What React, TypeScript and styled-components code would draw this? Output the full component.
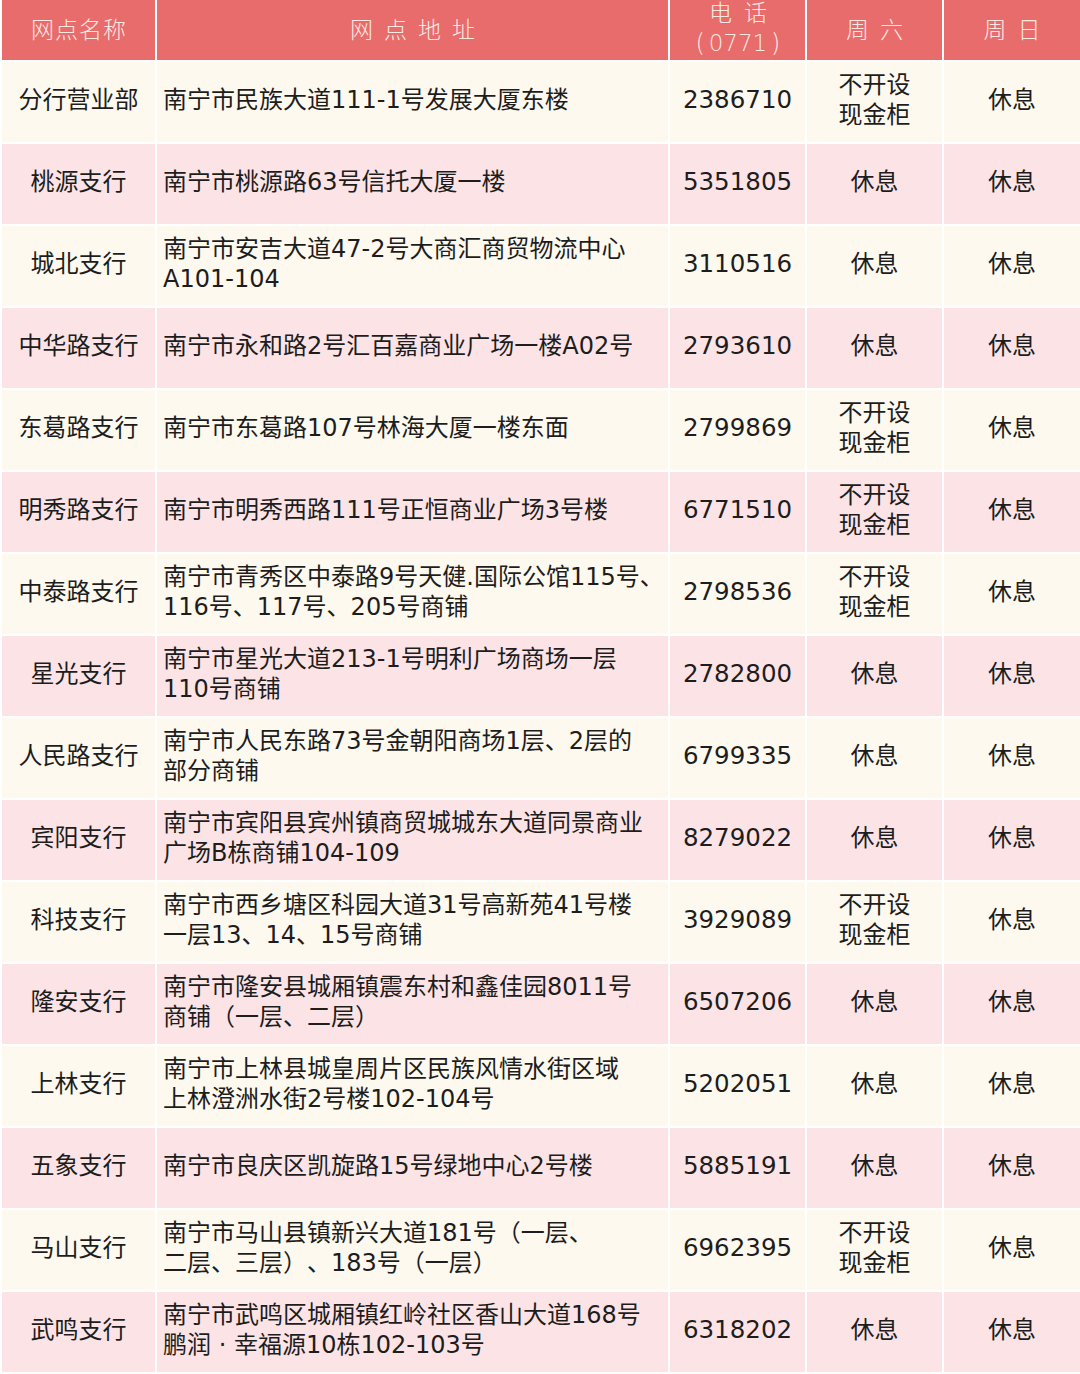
import { createGlobalStyle, styled } from "styled-components";

const GlobalStyle = createGlobalStyle`
  html, body {
    margin: 0;
    padding: 0;
    background: #ffffff;
  }
  body {
    font-family: "DejaVu Sans", "Noto Sans CJK SC", sans-serif;
    text-spacing-trim: space-all;
  }
`;

const Table = styled.div`
  width: 1080px;
  display: grid;
  grid-template-columns: 153px 511px 135px 135px 136px;
  grid-auto-rows: 80px;
  grid-template-rows: 60px;
  column-gap: 2px;
  row-gap: 2px;
  padding-left: 2px;
  box-sizing: border-box;
  background: #ffffff;
`;

const HeadCell = styled.div<{ $spaced?: boolean }>`
  background: #e86c6b;
  color: #fde9e2;
  font-family: "Noto Sans CJK SC", sans-serif;
  font-size: 23px;
  font-weight: 300;
  line-height: 28px;
  letter-spacing: ${(p) => (p.$spaced ? "11px" : "1px")};
  padding-left: ${(p) => (p.$spaced ? "11px" : "1px")};
  padding-bottom: 5px;
  display: flex;
  flex-direction: column;
  align-items: center;
  justify-content: center;
  text-align: center;
  white-space: pre;
`;

const HeadLine = styled.span<{ $spaced?: boolean }>`
  letter-spacing: ${(p) => (p.$spaced ? "12px" : "0")};
  padding-left: ${(p) => (p.$spaced ? "12px" : "0")};
  font-family: "DejaVu Sans", "Noto Sans CJK SC", sans-serif;
  font-weight: 300;
`;

const Paren = styled.span`
  font-family: "Noto Sans CJK SC", sans-serif;
  display: inline-block;
  width: 18px;
  text-align: center;
`;

const Cell = styled.div<{ $pink: boolean; $left?: boolean }>`
  background: ${(p) => (p.$pink ? "#fce4e6" : "#fdf9ef")};
  color: #1d1d1d;
  font-size: 24px;
  line-height: 30px;
  display: flex;
  flex-direction: column;
  justify-content: center;
  align-items: ${(p) => (p.$left ? "flex-start" : "center")};
  text-align: ${(p) => (p.$left ? "left" : "center")};
  padding: ${(p) => (p.$left ? "0 6px 4px" : "0 0 4px")};
  box-sizing: border-box;
  white-space: nowrap;
`;

const Phone = styled.span`
  font-size: 24.5px;
`;

type Branch = {
  name: string;
  addr: string[];
  phone: string;
  sat: boolean;
};

const branches: Branch[] = [
  { name: "分行营业部", addr: ["南宁市民族大道111-1号发展大厦东楼"], phone: "2386710", sat: false },
  { name: "桃源支行", addr: ["南宁市桃源路63号信托大厦一楼"], phone: "5351805", sat: true },
  { name: "城北支行", addr: ["南宁市安吉大道47-2号大商汇商贸物流中心", "A101-104"], phone: "3110516", sat: true },
  { name: "中华路支行", addr: ["南宁市永和路2号汇百嘉商业广场一楼A02号"], phone: "2793610", sat: true },
  { name: "东葛路支行", addr: ["南宁市东葛路107号林海大厦一楼东面"], phone: "2799869", sat: false },
  { name: "明秀路支行", addr: ["南宁市明秀西路111号正恒商业广场3号楼"], phone: "6771510", sat: false },
  { name: "中泰路支行", addr: ["南宁市青秀区中泰路9号天健.国际公馆115号、", "116号、117号、205号商铺"], phone: "2798536", sat: false },
  { name: "星光支行", addr: ["南宁市星光大道213-1号明利广场商场一层", "110号商铺"], phone: "2782800", sat: true },
  { name: "人民路支行", addr: ["南宁市人民东路73号金朝阳商场1层、2层的", "部分商铺"], phone: "6799335", sat: true },
  { name: "宾阳支行", addr: ["南宁市宾阳县宾州镇商贸城城东大道同景商业", "广场B栋商铺104-109"], phone: "8279022", sat: true },
  { name: "科技支行", addr: ["南宁市西乡塘区科园大道31号高新苑41号楼", "一层13、14、15号商铺"], phone: "3929089", sat: false },
  { name: "隆安支行", addr: ["南宁市隆安县城厢镇震东村和鑫佳园8011号", "商铺（一层、二层）"], phone: "6507206", sat: true },
  { name: "上林支行", addr: ["南宁市上林县城皇周片区民族风情水街区域", "上林澄洲水街2号楼102-104号"], phone: "5202051", sat: true },
  { name: "五象支行", addr: ["南宁市良庆区凯旋路15号绿地中心2号楼"], phone: "5885191", sat: true },
  { name: "马山支行", addr: ["南宁市马山县镇新兴大道181号（一层、", "二层、三层）、183号（一层）"], phone: "6962395", sat: false },
  { name: "武鸣支行", addr: ["南宁市武鸣区城厢镇红岭社区香山大道168号", "鹏润 · 幸福源10栋102-103号"], phone: "6318202", sat: true },
];

export default function App() {
  return (
    <>
      <GlobalStyle />
      <Table>
        <HeadCell>网点名称</HeadCell>
        <HeadCell $spaced>网点地址</HeadCell>
        <HeadCell>
          <HeadLine $spaced>电话</HeadLine>
          <HeadLine>
            <Paren>(</Paren>0771<Paren>)</Paren>
          </HeadLine>
        </HeadCell>
        <HeadCell $spaced>周六</HeadCell>
        <HeadCell $spaced>周日</HeadCell>
        {branches.map((b, i) => {
          const pink = i % 2 === 1;
          return [
            <Cell key={b.name + "n"} $pink={pink}>{b.name}</Cell>,
            <Cell key={b.name + "a"} $pink={pink} $left>
              {b.addr.map((line) => (
                <span key={line}>{line}</span>
              ))}
            </Cell>,
            <Cell key={b.name + "p"} $pink={pink}>
              <Phone>{b.phone}</Phone>
            </Cell>,
            <Cell key={b.name + "s"} $pink={pink}>
              {b.sat ? (
                "休息"
              ) : (
                <>
                  <span>不开设</span>
                  <span>现金柜</span>
                </>
              )}
            </Cell>,
            <Cell key={b.name + "u"} $pink={pink}>休息</Cell>,
          ];
        })}
      </Table>
    </>
  );
}
